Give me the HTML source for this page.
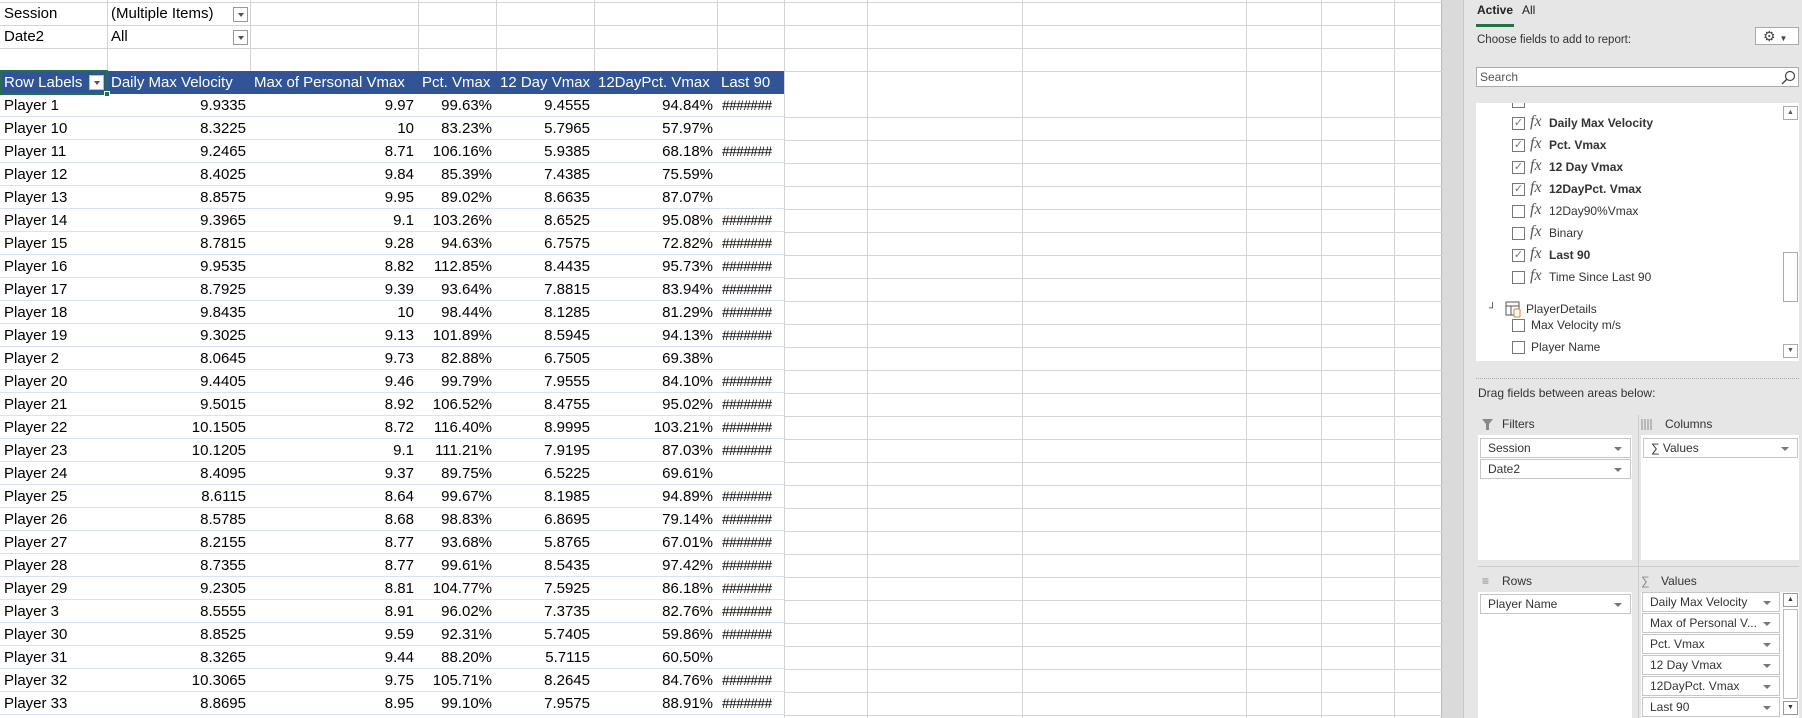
<!DOCTYPE html>
<html><head><meta charset="utf-8"><style>
*{margin:0;padding:0;box-sizing:border-box}
body{width:1802px;height:718px;overflow:hidden;background:#fff;font-family:"Liberation Sans",Arial,sans-serif;position:relative}
.s{position:absolute;left:0;top:0;width:1442px;height:718px;background:#fff;font-size:15px;color:#000}
.vl{position:absolute;top:0;width:1px;height:718px;background:#d4d4d4}
.hl{position:absolute;left:0;width:1442px;height:1px;background:#d4d4d4}
.c{position:absolute;height:23px;line-height:23px;white-space:nowrap}
.r{text-align:right}
.hdr{position:absolute;left:0;top:71px;width:784px;height:23px;background:#305496}
.hdr .c{color:#fff}
.dd{position:absolute;width:15px;height:15px;border:1px solid #999;background:#fff}
.dd:after{content:"";position:absolute;left:4px;top:5px;border-left:3px solid transparent;border-right:3px solid transparent;border-top:4px solid #555}
.p{position:absolute;left:1442px;top:0;width:360px;height:718px;background:#e6e6e6;font-size:12px;color:#333}
.pt{position:absolute;white-space:nowrap}
.cb{position:absolute;width:13px;height:13px;border:1px solid #777;background:#fff;font-size:11px;line-height:11px;text-align:center;color:#777}
.fx{position:absolute;font-family:"Liberation Serif",serif;font-style:italic;font-size:16px;color:#555}
.box{position:absolute;background:#fff;border:1px solid #c6c6c6;height:20px;line-height:18px;padding-left:7px;font-size:12px;color:#333}
.box:after{content:"";position:absolute;right:8px;top:8px;border-left:4px solid transparent;border-right:4px solid transparent;border-top:4px solid #777}
</style></head><body>
<div class="s">
<div class="vl" style="left:107px"></div><div class="vl" style="left:250px"></div><div class="vl" style="left:418px"></div><div class="vl" style="left:496px"></div><div class="vl" style="left:594px"></div><div class="vl" style="left:717px"></div><div class="vl" style="left:784px"></div><div class="vl" style="left:867px"></div><div class="vl" style="left:1022px"></div><div class="vl" style="left:1246px"></div><div class="vl" style="left:1321px"></div><div class="vl" style="left:1394px"></div><div class="vl" style="left:1441px;background:#bbb"></div>
<div id="hls"></div>
<div style="position:absolute;left:0;top:94px;width:784px;height:624px;background:#fff"></div>
<div id="pl"></div>
<div class="c" style="left:4px;top:2px">Session</div><div class="c" style="left:111px;top:2px">(Multiple Items)</div>
<div class="dd" style="left:233px;top:7px"></div>
<div class="c" style="left:4px;top:25px">Date2</div><div class="c" style="left:111px;top:25px">All</div>
<div class="dd" style="left:233px;top:30px"></div>
<div class="hdr">
<div class="c" style="left:4px;top:0">Row Labels</div>
<div class="dd" style="left:89px;top:4px;border-color:#bbb"></div>
<div class="c" style="left:111px;top:0">Daily Max Velocity</div>
<div class="c" style="left:254px;top:0">Max of Personal Vmax</div>
<div class="c" style="left:422px;top:0">Pct. Vmax</div>
<div class="c" style="left:500px;top:0">12 Day Vmax</div>
<div class="c" style="left:598px;top:0">12DayPct. Vmax</div>
<div class="c" style="left:721px;top:0">Last 90</div>
</div>
<div style="position:absolute;left:0;top:70px;width:108px;height:25px;border:2px solid #217346"></div>
<div style="position:absolute;left:104px;top:91px;width:6px;height:6px;background:#217346;border:1px solid #fff"></div>
<div id="rows"></div>
</div>
<div style="position:absolute;left:1442px;top:0;width:22px;height:718px;background:#dadada;border-right:1px solid #c8c8c8"></div>
<div class="p" style="left:1464px;width:338px">
<div class="pt" style="left:13px;top:3px;font-weight:bold;font-size:12px;color:#222">Active</div>
<div class="pt" style="left:58px;top:3px;font-size:12px;color:#222">All</div>
<div style="position:absolute;left:12px;top:24px;width:38px;height:3px;background:#217346"></div>
<div class="pt" style="left:13px;top:34px;font-size:11.5px">Choose fields to add to report:</div>
<div style="position:absolute;left:291px;top:27px;width:44px;height:18px;border:1px solid #aaa;background:#fff;font-size:14px;line-height:16px;padding-left:7px;color:#444">⚙ <span style="font-size:8px">▼</span></div>
<div style="position:absolute;left:12px;top:67px;width:323px;height:20px;border:1px solid #aaa;background:#fff;padding-left:3px;line-height:18px;color:#555">Search
<svg style="position:absolute;right:2px;top:2px" width="15" height="15" viewBox="0 0 15 15"><circle cx="9" cy="6" r="4.5" fill="none" stroke="#444" stroke-width="1.2"/><line x1="5.8" y1="9.2" x2="1" y2="14" stroke="#444" stroke-width="1.4"/></svg></div>
<div style="position:absolute;left:12px;top:103px;width:323px;height:258px;background:#fff;overflow:hidden">
<div style="position:absolute;right:1px;top:3px;width:15px;height:252px;background:#fff">
<div style="position:absolute;left:0;top:0;width:15px;height:14px;border:1px solid #aaa;font-size:7px;text-align:center;line-height:12px;color:#555">▲</div>
<div style="position:absolute;left:0;top:146px;width:15px;height:50px;border:1px solid #aaa"></div>
<div style="position:absolute;left:0;top:238px;width:15px;height:14px;border:1px solid #aaa;font-size:7px;text-align:center;line-height:12px;color:#555">▼</div>
</div>
<div class="cb" style="left:36px;top:-8px"></div>
<div id="flds"></div>
<div class="pt" style="left:13px;top:200px;font-size:10px">┘</div>
<svg style="position:absolute;left:29px;top:198px" width="17" height="17" viewBox="0 0 17 17"><rect x="1" y="1" width="13" height="13" fill="#fff" stroke="#555"/><line x1="1" y1="5" x2="14" y2="5" stroke="#555"/><line x1="6" y1="5" x2="6" y2="14" stroke="#555"/><rect x="9" y="8" width="6" height="8" rx="1" fill="#fff" stroke="#e8762b"/></svg>
<div class="pt" style="left:50px;top:199px">PlayerDetails</div>
<div class="cb" style="left:36px;top:216px"></div><div class="pt" style="left:55px;top:215px">Max Velocity m/s</div>
<div class="cb" style="left:36px;top:238px"></div><div class="pt" style="left:55px;top:237px">Player Name</div>
</div>
<div style="position:absolute;left:12px;top:378px;width:323px;border-top:1px dotted #aaa"></div>
<div class="pt" style="left:14px;top:386px">Drag fields between areas below:</div>
<svg style="position:absolute;left:18px;top:419px" width="11" height="11" viewBox="0 0 11 11"><path d="M0 0H11L7 5V11H4V5Z" fill="#888"/></svg><div class="pt" style="left:38px;top:417px">Filters</div>
<svg style="position:absolute;left:177px;top:419px" width="12" height="11" viewBox="0 0 12 11"><path d="M1 0V11M4 0V11M7 0V11M10 0V11" stroke="#999" stroke-width="1.2"/></svg><div class="pt" style="left:201px;top:417px">Columns</div>
<div style="position:absolute;left:14px;top:435px;width:154px;height:125px;background:#fff"></div>
<div style="position:absolute;left:177px;top:435px;width:158px;height:125px;background:#fff"></div>
<div class="box" style="left:16px;top:438px;width:151px">Session</div>
<div class="box" style="left:16px;top:459px;width:151px">Date2</div>
<div class="box" style="left:179px;top:438px;width:155px">∑ Values</div>
<div style="position:absolute;left:174px;top:415px;width:1px;height:303px;background:#ccc"></div>
<div style="position:absolute;left:14px;top:566px;width:321px;height:1px;background:#ccc"></div>
<div class="pt" style="left:18px;top:574px;color:#888">≡</div><div class="pt" style="left:38px;top:574px">Rows</div>
<div class="pt" style="left:177px;top:574px;color:#888">∑</div><div class="pt" style="left:197px;top:574px">Values</div>
<div style="position:absolute;left:14px;top:592px;width:154px;height:126px;background:#fff"></div>
<div style="position:absolute;left:177px;top:592px;width:158px;height:126px;background:#fff"></div>
<div class="box" style="left:16px;top:594px;width:151px">Player Name</div>
<div class="box" style="left:178px;top:592px;width:138px">Daily Max Velocity</div>
<div class="box" style="left:178px;top:613px;width:138px">Max of Personal V...</div>
<div class="box" style="left:178px;top:634px;width:138px">Pct. Vmax</div>
<div class="box" style="left:178px;top:655px;width:138px">12 Day Vmax</div>
<div class="box" style="left:178px;top:676px;width:138px">12DayPct. Vmax</div>
<div class="box" style="left:178px;top:697px;width:138px">Last 90</div>
<div style="position:absolute;left:319px;top:593px;width:15px;height:14px;border:1px solid #999;background:#fff;font-size:7px;text-align:center;line-height:12px">▲</div>
<div style="position:absolute;left:319px;top:609px;width:15px;height:90px;border:1px solid #bbb;background:#fff"></div>
<div style="position:absolute;left:319px;top:701px;width:15px;height:14px;border:1px solid #999;background:#fff;font-size:7px;text-align:center;line-height:12px">▼</div>
</div>
<script>
var h='',pl='';for(var y of [2,25,48,71]) h+='<div class="hl" style="top:'+y+'px"></div>';
var d=[["Player 1","9.9335","9.97","99.63%","9.4555","94.84%",1],["Player 10","8.3225","10","83.23%","5.7965","57.97%",0],["Player 11","9.2465","8.71","106.16%","5.9385","68.18%",1],["Player 12","8.4025","9.84","85.39%","7.4385","75.59%",0],["Player 13","8.8575","9.95","89.02%","8.6635","87.07%",0],["Player 14","9.3965","9.1","103.26%","8.6525","95.08%",1],["Player 15","8.7815","9.28","94.63%","6.7575","72.82%",1],["Player 16","9.9535","8.82","112.85%","8.4435","95.73%",1],["Player 17","8.7925","9.39","93.64%","7.8815","83.94%",1],["Player 18","9.8435","10","98.44%","8.1285","81.29%",1],["Player 19","9.3025","9.13","101.89%","8.5945","94.13%",1],["Player 2","8.0645","9.73","82.88%","6.7505","69.38%",0],["Player 20","9.4405","9.46","99.79%","7.9555","84.10%",1],["Player 21","9.5015","8.92","106.52%","8.4755","95.02%",1],["Player 22","10.1505","8.72","116.40%","8.9995","103.21%",1],["Player 23","10.1205","9.1","111.21%","7.9195","87.03%",1],["Player 24","8.4095","9.37","89.75%","6.5225","69.61%",0],["Player 25","8.6115","8.64","99.67%","8.1985","94.89%",1],["Player 26","8.5785","8.68","98.83%","6.8695","79.14%",1],["Player 27","8.2155","8.77","93.68%","5.8765","67.01%",1],["Player 28","8.7355","8.77","99.61%","8.5435","97.42%",1],["Player 29","9.2305","8.81","104.77%","7.5925","86.18%",1],["Player 3","8.5555","8.91","96.02%","7.3735","82.76%",1],["Player 30","8.8525","9.59","92.31%","5.7405","59.86%",1],["Player 31","8.3265","9.44","88.20%","5.7115","60.50%",0],["Player 32","10.3065","9.75","105.71%","8.2645","84.76%",1],["Player 33","8.8695","8.95","99.10%","7.9575","88.91%",1]];
var r='',R=[107,250,418,496,594,717];
d.forEach(function(a,i){var t=94+i*23;h+='<div class="hl" style="top:'+(t+23)+'px"></div>';
pl+='<div style="position:absolute;left:0;top:'+(t+22)+'px;width:784px;height:1px;background:#d9e1f2"></div>';
r+='<div class="c" style="left:4px;top:'+t+'px">'+a[0]+'</div>';
for(var k=1;k<6;k++)r+='<div class="c r" style="left:0;width:'+(R[k]-4)+'px;top:'+t+'px">'+a[k]+'</div>';
if(a[6])r+='<div class="c" style="left:722px;top:'+t+'px;font-size:13.5px;letter-spacing:-0.4px">#######</div>';});
document.getElementById('hls').innerHTML=h;document.getElementById('pl').innerHTML=pl;document.getElementById('rows').innerHTML=r;
var f=[["Daily Max Velocity",1],["Pct. Vmax",1],["12 Day Vmax",1],["12DayPct. Vmax",1],["12Day90%Vmax",0],["Binary",0],["Last 90",1],["Time Since Last 90",0]],s='';
f.forEach(function(a,i){var t=12+i*22;s+='<div class="cb" style="left:36px;top:'+(t+2)+'px">'+(a[1]?'✓':'')+'</div><div class="fx" style="left:54px;top:'+(t-2)+'px">fx</div><div class="pt" style="left:73px;top:'+(t+1)+'px;'+(a[1]?'font-weight:bold;color:#333':'')+'">'+a[0]+'</div>';});
document.getElementById('flds').innerHTML=s;
</script>
</body></html>
